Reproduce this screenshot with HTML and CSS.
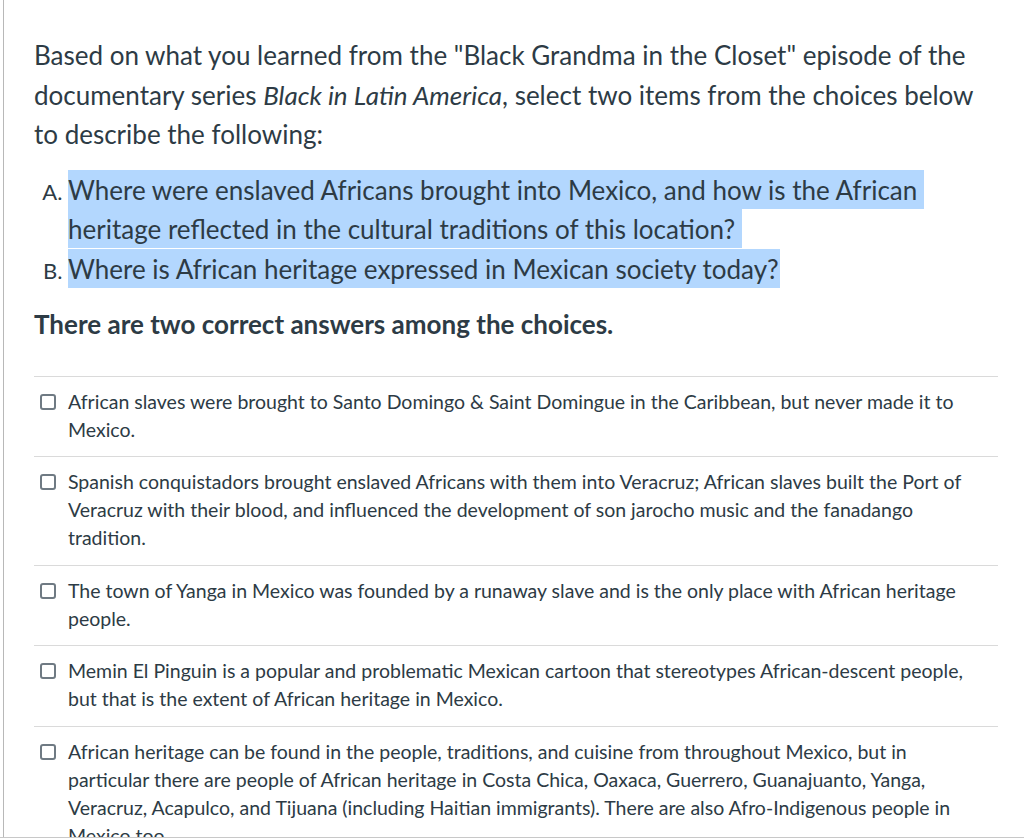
FILE: index.html
```html
<!DOCTYPE html>
<html lang="en">
<head>
<meta charset="utf-8">
<title>Quiz question</title>
<link rel="stylesheet" href="styles.css">
</head>
<body>
<div class="viewport">
  <div class="frame">
    <div class="question">
      <p class="prompt">Based on what you learned from the "Black Grandma in the Closet" episode of the documentary series <em>Black in Latin America</em>, select two items from the choices below to describe the following:</p>
      <ol class="parts">
        <li><span class="hl">Where were enslaved Africans brought into Mexico, and how is the African heritage reflected in the cultural traditions of this location?</span></li>
        <li><span class="hl hl-end">Where is African heritage expressed in Mexican society today?</span></li>
      </ol>
      <p class="note">There are two correct answers among the choices.</p>
      <div class="answers">
        <label class="answer"><span class="box"></span><span class="text">African slaves were brought to Santo Domingo &amp; Saint Domingue in the Caribbean, but never made it to Mexico.</span></label>
        <label class="answer"><span class="box"></span><span class="text">Spanish conquistadors brought enslaved Africans with them into Veracruz; African slaves built the Port of Veracruz with their blood, and influenced the development of son jarocho music and the fanadango tradition.</span></label>
        <label class="answer"><span class="box"></span><span class="text">The town of Yanga in Mexico was founded by a runaway slave and is the only place with African heritage people.</span></label>
        <label class="answer"><span class="box"></span><span class="text">Memin El Pinguin is a popular and problematic Mexican cartoon that stereotypes African-descent people, but that is the extent of African heritage in Mexico.</span></label>
        <label class="answer"><span class="box"></span><span class="text">African heritage can be found in the people, traditions, and cuisine from throughout Mexico, but in particular there are people of African heritage in Costa Chica, Oaxaca, Guerrero, Guanajuanto, Yanga, Veracruz, Acapulco, and Tijuana (including Haitian immigrants). There are also Afro-Indigenous people in Mexico too.</span></label>
      </div>
    </div>
  </div>
</div>
</body>
</html>
```
FILE: styles.css
```css
html, body {
  margin: 0;
  padding: 0;
  background: #ffffff;
}
body {
  font-family: Lato, "Open Sans", sans-serif;
  color: #2d3b45;
}
.viewport {
  height: 837px;
  border-bottom: 1px solid #c8c8c8;
  overflow: hidden;
}
.frame {
  margin-left: 3px;
  height: 100%;
  border-left: 1px solid #b8b8b8;
  padding: 36px 26px 0 30px;
}
.prompt {
  margin: 0;
  font-size: 26px;
  line-height: 39.5px;
}
.parts {
  list-style: upper-alpha;
  margin: 16px 0 0;
  padding-left: 34px;
  font-size: 26px;
  line-height: 39px;
}
.parts li {
  margin: 0 0 1px;
}
.parts li::marker {
  font-size: 22px;
}
.hl {
  background: #b3d7fe;
  padding: 4px 7px 3px 0;
  box-decoration-break: clone;
  -webkit-box-decoration-break: clone;
}
.hl-end {
  padding-right: 1px;
}
.note {
  margin: 16px 0 0;
  font-size: 26px;
  font-weight: 700;
  line-height: 39px;
}
.answers {
  margin-top: 32px;
}
.answer {
  display: flex;
  gap: 12px;
  align-items: flex-start;
  border-top: 1px solid #dadada;
  padding: 11px 20px 12.5px 6px;
  font-size: 19.5px;
  line-height: 28px;
}
.box {
  flex: none;
  width: 12px;
  height: 12px;
  margin-top: 6px;
  border: 2px solid #6f7a83;
  border-radius: 3px;
}
.text {
  flex: 1;
}
```
